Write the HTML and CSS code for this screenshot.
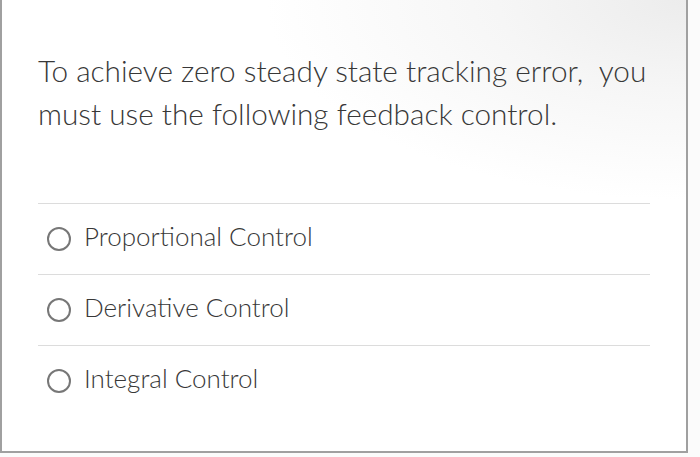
FILE: index.html
```html
<!DOCTYPE html>
<html>
<head>
<meta charset="utf-8">
<link rel="stylesheet" href="styles.css">
</head>
<body>
<div class="card">
  <p class="question">To achieve zero steady state tracking error,&nbsp; you must use the following feedback control.</p>
  <ul class="answers">
    <li class="answer"><span class="radio"></span><span class="label">Proportional Control</span></li>
    <li class="answer"><span class="radio"></span><span class="label">Derivative Control</span></li>
    <li class="answer"><span class="radio"></span><span class="label">Integral Control</span></li>
  </ul>
</div>
</body>
</html>
```
FILE: styles.css
```css
html, body {
  margin: 0;
  padding: 0;
  background: #fbfbfb;
}
body {
  width: 700px;
  height: 457px;
  overflow: hidden;
  font-family: "Lato", "Noto Sans", sans-serif;
}
.card {
  box-sizing: border-box;
  width: 688px;
  height: 453px;
  border-left: 2px solid #a0a0a0;
  border-right: 2px solid #a0a0a0;
  border-bottom: 2px solid #a0a0a0;
  background: radial-gradient(ellipse 420px 200px at 100% 0%, #ececec 0%, #f6f6f6 45%, #ffffff 100%);
  padding: 49px 36px 0 36px;
}
.question {
  margin: 0;
  font-size: 29.75px;
  line-height: 43px;
  color: #383838;
  font-weight: 300;
}
.answers {
  list-style: none;
  margin: 68px 0 0;
  padding: 0;
}
.answer {
  display: flex;
  align-items: center;
  height: 64px;
  padding-bottom: 6px;
  border-top: 1px solid #dcdcdc;
  padding-left: 9px;
  gap: 13px;
}
.radio {
  box-sizing: border-box;
  width: 24px;
  height: 24px;
  border: 2.5px solid #777;
  border-radius: 50%;
  flex: none;
  margin-top: 5px;
}
.label {
  font-size: 26px;
  color: #383838;
  font-weight: 300;
}
```
